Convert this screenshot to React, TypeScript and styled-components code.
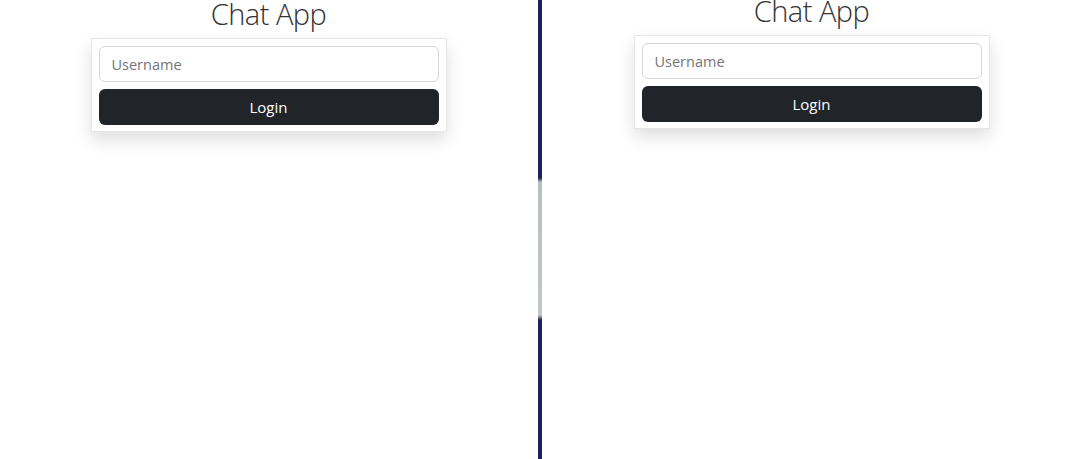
import React, { FunctionComponent } from "react";
import styled, { createGlobalStyle } from "styled-components";

const GlobalStyle = createGlobalStyle`
  html, body {
    margin: 0;
    padding: 0;
    background: #fff;
    overflow: hidden;
  }
  body {
    font-family: "Open Sans", "Liberation Sans", sans-serif;
  }
`;

const Screen = styled.div`
  display: flex;
  width: 1071px;
  height: 459px;
  overflow: hidden;
`;

const Pane = styled.div<{ $width: number; $shift: number }>`
  flex: 0 0 ${(p) => p.$width}px;
  display: flex;
  flex-direction: column;
  align-items: center;
  margin-top: ${(p) => p.$shift}px;
`;

const Divider = styled.div`
  flex: 0 0 4px;
  margin-left: 1px;
  background: linear-gradient(
    to bottom,
    #1b2152 0px,
    #1d2456 178px,
    #b9bdc4 182px,
    #c3c6cc 315px,
    #1d2456 320px,
    #1b2152 100%
  );
`;

const Title = styled.h1`
  margin: 0;
  font-size: 29px;
  line-height: 28px;
  letter-spacing: -0.5px;
  font-weight: 300;
  color: #333;
`;

const Card = styled.div`
  width: 356px;
  margin-top: 10px;
  padding: 7px 7px 6px;
  box-sizing: border-box;
  background: #fff;
  border: 1px solid #e6e6e6;
  box-shadow: 0 8px 16px rgba(0, 0, 0, 0.13);
  display: flex;
  flex-direction: column;
  gap: 7px;
`;

const UsernameInput = styled.input`
  height: 36px;
  box-sizing: border-box;
  padding: 0 12px;
  border: 1px solid #d3d6da;
  border-radius: 6px;
  font-family: inherit;
  font-size: 14.5px;
  color: #212529;
  outline: none;
  ::placeholder {
    color: #6c757d;
  }
`;

const LoginButton = styled.button`
  height: 36px;
  border: 0;
  border-radius: 6px;
  background: #212529;
  color: #fff;
  font-family: inherit;
  font-size: 15px;
  cursor: pointer;
`;

const LoginBox: FunctionComponent = () => (
  <>
    <Title>Chat App</Title>
    <Card>
      <UsernameInput type="text" placeholder="Username" />
      <LoginButton>Login</LoginButton>
    </Card>
  </>
);

const App: FunctionComponent = () => {
  return (
    <Screen>
      <GlobalStyle />
      <Pane $width={537} $shift={0}>
        <LoginBox />
      </Pane>
      <Divider />
      <Pane $width={539} $shift={-3}>
        <LoginBox />
      </Pane>
    </Screen>
  );
};

export default App;
